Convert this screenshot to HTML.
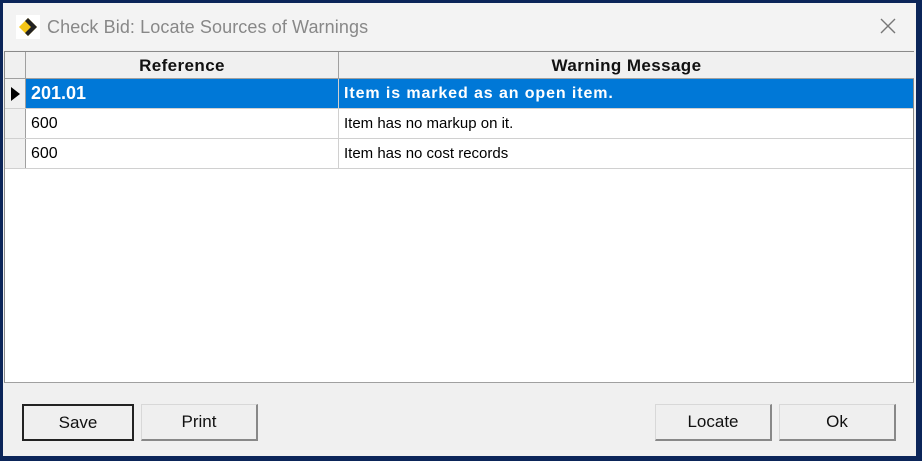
<!DOCTYPE html>
<html><head><style>
*{margin:0;padding:0;box-sizing:border-box}
body{width:922px;height:461px;background:#0b2559;position:relative;overflow:hidden;font-family:"Liberation Sans",Arial,sans-serif}
.win{position:absolute;left:3px;top:3px;width:913px;height:453px;background:#f0f0f0;border-top-right-radius:6px}
.title{position:absolute;left:0;top:0;width:913px;height:47px;background:#f3f3f3}
.title span{position:absolute;left:44px;top:14px;font-size:18px;color:#888;letter-spacing:0.1px}
.x{position:absolute;left:875px;top:13px}
.grid{position:absolute;left:1px;top:48px;width:910px;height:332px;background:#fff;border:1px solid #8a8a8a;border-bottom-color:#a0a0a0}
.hdr{background:#f0f0f0;border-right:1px solid #a0a0a0;border-bottom:1px solid #a0a0a0;height:27px;position:absolute;top:0;font-weight:bold;font-size:17px;text-align:center;line-height:28px;color:#111;letter-spacing:0.4px}
.row{position:absolute;left:0;width:908px;height:30px;border-bottom:1px solid #d0d0d0}
.rh{position:absolute;left:0;top:0;width:21px;height:100%;background:#f0f0f0;border-right:1px solid #a0a0a0}
.cell{position:absolute;top:0;height:100%;line-height:29px;font-size:15px;padding-left:5px}
.btn{position:absolute;top:401px;height:37px;background:#efefef;border:1px solid #d8d8d8;border-right:2px solid #888;border-bottom:2px solid #888;font-size:17px;text-align:center;line-height:34px;color:#111}
</style></head><body>
<div class="win">
 <div class="title">
  <svg style="position:absolute;left:13px;top:12px" width="24" height="24" viewBox="0 0 24 24"><rect x="0" y="0" width="24" height="24" fill="#fff"/><polygon points="3,12 12,3 21,12 12,21" fill="#f5c518"/><polygon points="9,6 12,3 21,12 12,21 9,18 15,12" fill="#222"/></svg>
  <span>Check Bid: Locate Sources of Warnings</span>
  <svg class="x" width="20" height="20" viewBox="0 0 20 20"><path d="M3 3L17 17M17 3L3 17" stroke="#777" stroke-width="1.4"/></svg>
 </div>
 <div class="grid">
  <div class="hdr" style="left:0;width:21px"></div>
  <div class="hdr" style="left:21px;width:313px">Reference</div>
  <div class="hdr" style="left:334px;width:575px;border-right:none">Warning Message</div>
  <div class="row" style="top:27px;background:#0078d7;border-bottom:1px solid #d0d0d0">
   <div class="rh"><svg style="position:absolute;left:6px;top:8px" width="9" height="14"><polygon points="0,0 9,7 0,14" fill="#000"/></svg></div>
   <div class="cell" style="left:21px;width:313px;color:#fff;font-weight:bold;font-size:18px;border-right:1px solid #d0d0d0">201.01</div>
   <div class="cell" style="left:334px;color:#fff;font-weight:bold;font-size:16px;letter-spacing:0.9px">Item is marked as an open item.</div>
  </div>
  <div class="row" style="top:57px">
   <div class="rh"></div>
   <div class="cell" style="left:21px;width:313px;border-right:1px solid #d0d0d0;font-size:16px">600</div>
   <div class="cell" style="left:334px">Item has no markup on it.</div>
  </div>
  <div class="row" style="top:87px">
   <div class="rh"></div>
   <div class="cell" style="left:21px;width:313px;border-right:1px solid #d0d0d0;font-size:16px">600</div>
   <div class="cell" style="left:334px">Item has no cost records</div>
  </div>
 </div>
 <div class="btn" style="left:19px;width:112px;border:2px solid #222;line-height:33px">Save</div>
 <div class="btn" style="left:138px;width:117px">Print</div>
 <div class="btn" style="left:652px;width:117px">Locate</div>
 <div class="btn" style="left:776px;width:117px">Ok</div>
</div>
</body></html>
